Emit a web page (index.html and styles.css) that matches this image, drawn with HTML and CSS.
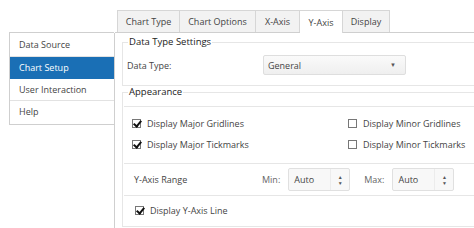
FILE: index.html
```html
<!DOCTYPE html>
<html>
<head>
<meta charset="utf-8">
<link rel="stylesheet" href="styles.css">
</head>
<body>
<div class="app">
  <div class="tabbar">
    <div class="tab tab-type">Chart Type</div>
    <div class="tab tab-options">Chart Options</div>
    <div class="tab tab-x">X-Axis</div>
    <div class="tab tab-y active">Y-Axis</div>
    <div class="tab tab-display">Display</div>
  </div>
  <div class="main">
    <ul class="nav">
      <li class="nav-item">Data Source</li>
      <li class="nav-item active">Chart Setup</li>
      <li class="nav-item">User Interaction</li>
      <li class="nav-item">Help</li>
    </ul>
    <div class="panel">
      <fieldset class="group group-type">
        <legend class="legend">Data Type Settings</legend>
        <div class="type-row">
          <span class="label">Data Type:</span>
          <div class="select">
            <span>General</span>
            <span class="select-arrow">&#9660;</span>
          </div>
        </div>
      </fieldset>
      <fieldset class="group group-appearance">
        <legend class="legend">Appearance</legend>
        <div class="section section-checks">
          <label class="check"><span class="box checked"></span>Display Major Gridlines</label>
          <label class="check"><span class="box"></span>Display Minor Gridlines</label>
          <label class="check"><span class="box checked"></span>Display Major Tickmarks</label>
          <label class="check"><span class="box"></span>Display Minor Tickmarks</label>
        </div>
        <div class="section section-range">
          <span class="label range-label">Y-Axis Range</span>
          <span class="small-label">Min:</span>
          <div class="spinner"><span>Auto</span><span class="spin-btn"><span>&#9650;</span><span>&#9660;</span></span></div>
          <span class="small-label">Max:</span>
          <div class="spinner"><span>Auto</span><span class="spin-btn"><span>&#9650;</span><span>&#9660;</span></span></div>
        </div>
        <div class="section section-line">
          <label class="check"><span class="box checked"></span>Display Y-Axis Line</label>
        </div>
      </fieldset>
    </div>
  </div>
</div>
</body>
</html>
```

FILE: styles.css
```css
html, body {
  margin: 0;
  padding: 0;
  background: #fff;
  overflow: hidden;
}
body {
  font-family: "Open Sans", "Noto Sans", sans-serif;
  font-size: 9px;
  color: #3a3a3a;
  width: 474px;
  height: 228px;
}
.app {
  padding-top: 10px;
}
.tabbar {
  display: flex;
  margin-left: 115px;
  padding-left: 2px;
  height: 22px;
  border-bottom: 1px solid #cfcfcf;
}
.tab {
  box-sizing: border-box;
  height: 22px;
  display: flex;
  align-items: center;
  justify-content: center;
  background: #f2f2f2;
  border: 1px solid #d6d6d6;
  border-bottom: none;
  border-left: none;
  color: #444;
}
.tab-type { width: 63px; border-left: 1px solid #d6d6d6; }
.tab-options { width: 76px; }
.tab-x { width: 44px; }
.tab-y { width: 43px; }
.tab-display { width: 47px; }
.tab.active {
  background: #fff;
  height: 23px;
  margin-bottom: -1px;
  position: relative;
  z-index: 1;
}
.main {
  display: flex;
}
.nav {
  list-style: none;
  margin: -1px 0 0 9px;
  padding: 0;
  width: 105px;
  align-self: flex-start;
  border: 1px solid #cfcfcf;
  border-right: none;
  box-sizing: border-box;
}
.nav-item {
  height: 22px;
  line-height: 21px;
  padding-left: 9px;
  border-bottom: 1px solid #e2e2e2;
  box-sizing: border-box;
  color: #444;
}
.nav-item:first-child {
  height: 24px;
  line-height: 23px;
}
.nav-item:last-child {
  border-bottom: none;
  height: 23px;
}
.nav-item.active {
  background: #1a6fb5;
  color: #fff;
  border-bottom-color: #1a6fb5;
}
.panel {
  flex: 1;
  border-left: 1px solid #cfcfcf;
  padding-left: 7px;
  height: 200px;
  min-width: 0;
}
.group {
  margin: 0 -12px 0 0;
  padding: 0 0 0 4px;
  border: 1px solid #e6e6e6;
  min-width: 0;
}
.legend {
  padding: 0 1px;
  margin-left: 1px;
  color: #222;
  font-size: 9.5px;
  line-height: 14px;
}
.group-type {
  margin-top: 2px;
  padding-bottom: 10px;
}
.type-row {
  display: flex;
  align-items: center;
  margin-top: 6px;
  height: 20px;
}
.label {
  width: 136px;
  color: #444;
}
.select {
  box-sizing: border-box;
  width: 143px;
  height: 20px;
  display: flex;
  align-items: center;
  justify-content: space-between;
  padding: 0 9px 0 4px;
  border: 1px solid #dedede;
  border-radius: 2px;
  background: linear-gradient(#fafafa, #efefef);
  color: #444;
}
.select-arrow {
  font-size: 6px;
  color: #555;
}
.group-appearance {
  margin-top: -1px;
  padding-left: 0;
  height: 140px;
}
.group-appearance .legend {
  margin-left: 5px;
}
.section {
  border-top: 1px solid #e6e6e6;
  margin-left: 1px;
}
.section-checks {
  margin-top: 7px;
  display: grid;
  grid-template-columns: 216px 1fr;
  row-gap: 5px;
  padding: 8px 0 11px 8px;
}
.check {
  display: flex;
  align-items: center;
  height: 16px;
  color: #444;
}
.box {
  box-sizing: border-box;
  width: 9px;
  height: 9px;
  border: 1px solid #777;
  background: #fff;
  margin-right: 6px;
  position: relative;
}
.box.checked::after {
  content: "";
  position: absolute;
  left: 2px;
  top: -1px;
  width: 3px;
  height: 6px;
  border: solid #111;
  border-width: 0 2px 2px 0;
  transform: rotate(40deg);
}
.section-range {
  display: flex;
  align-items: center;
  height: 31px;
  padding-left: 10px;
}
.range-label {
  width: 128px;
}
.small-label {
  color: #666;
  margin-right: 8px;
}
.spinner {
  box-sizing: border-box;
  width: 62px;
  height: 23px;
  display: flex;
  align-items: center;
  justify-content: space-between;
  border: 1px solid #e0e0e0;
  border-radius: 2px;
  background: #f8f8f8;
  padding-left: 5px;
  margin-right: 14px;
  color: #444;
}
.spin-btn {
  display: flex;
  flex-direction: column;
  align-items: center;
  justify-content: center;
  width: 18px;
  height: 100%;
  border-left: 1px solid #ececec;
  font-size: 5px;
  line-height: 6px;
  color: #555;
}
.section-line {
  height: 28px;
  display: flex;
  align-items: center;
  padding-left: 11px;
}
```
